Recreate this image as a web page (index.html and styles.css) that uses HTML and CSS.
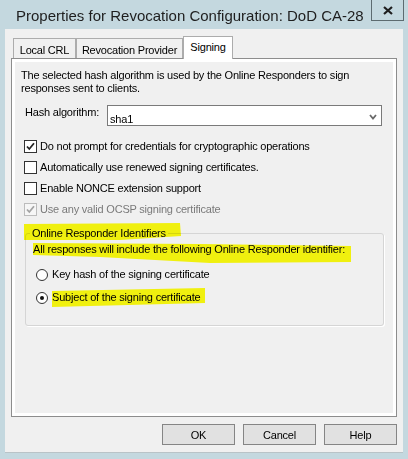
FILE: index.html
```html
<html lang="en">
<head>
    <title>Properties for Revocation Configuration</title>
    <link rel="stylesheet" href="styles.css">
</head>
<body>
    <div class="titlebar">
        <span class="title">Properties for Revocation Configuration: DoD CA-28</span>
        <span class="close">
            <svg width="10" height="9" viewBox="0 0 10 9"><path d="M1 1 L9 8 M9 1 L1 8" stroke="#1e1e1e" stroke-width="2.2" fill="none"/></svg>
        </span>
    </div>
    <div class="client">
        <div class="tabs">
            <div class="tab tabCrl">Local CRL</div>
            <div class="tab tabProvider">Revocation Provider</div>
            <div class="tab tabSigning selected">Signing</div>
        </div>
        <div class="panel">
            <div class="page">
                <p class="intro">The selected hash algorithm is used by the Online Responders to sign<br>responses sent to clients.</p>

                <div class="hashRow">
                    <span class="hashLabel">Hash algorithm:</span>
                    <div class="select">
                        <span>sha1</span>
                        <svg class="chevron" width="8" height="6" viewBox="0 0 8 6"><path d="M1 1 L4 4.5 L7 1" stroke="#6a6a6a" stroke-width="1.8" fill="none"/></svg>
                    </div>
                </div>

                <div class="checks">
                    <div class="check">
                        <span class="box"><svg width="11" height="11" viewBox="0 0 11 11"><path d="M2 5.5 L4.3 8 L9 2.3" stroke="#222" stroke-width="1.8" fill="none"/></svg></span>
                        <span>Do not prompt for credentials for cryptographic operations</span>
                    </div>
                    <div class="check">
                        <span class="box"></span>
                        <span>Automatically use renewed signing certificates.</span>
                    </div>
                    <div class="check">
                        <span class="box"></span>
                        <span>Enable NONCE extension support</span>
                    </div>
                    <div class="check disabled">
                        <span class="box"><svg width="11" height="11" viewBox="0 0 11 11"><path d="M2 5.5 L4.3 8 L9 2.3" stroke="#a3a3a3" stroke-width="1.8" fill="none"/></svg></span>
                        <span>Use any valid OCSP signing certificate</span>
                    </div>
                </div>

                <fieldset class="group">
                    <legend>Online Responder Identifiers</legend>
                    <p class="groupText">All responses will include the following Online Responder identifier:</p>
                    <div class="radio first">
                        <span class="dot"></span>
                        <span>Key hash of the signing certificate</span>
                    </div>
                    <div class="radio">
                        <span class="dot on"></span>
                        <span>Subject of the signing certificate</span>
                    </div>
                </fieldset>
            </div>
        </div>
        <div class="buttons">
            <button class="btn">OK</button>
            <button class="btn">Cancel</button>
            <button class="btn">Help</button>
        </div>
    </div>

    <!-- highlighter marks drawn over the group box -->
    <svg class="marker" width="408" height="459" viewBox="0 0 408 459">
        <polygon points="24,224 180,223 181,236 120,240 24,240" fill="#ffff10"/>
        <polygon points="33,243 200,244 351,246 351,262 210,263 100,257 33,255" fill="#ffff10"/>
        <polygon points="52,291 205,288 205,303 52,307" fill="#ffff10"/>
    </svg>
</body>
</html>
```

FILE: styles.css
```css
body {
    margin: 0;
    width: 408px;
    height: 459px;
    overflow: hidden;
    background-color: #c4d8df;
    font-family: "Liberation Sans", Arial, sans-serif;
    font-size: 11px;
    letter-spacing: -0.2px;
    color: #000;
}
.titlebar {
    height: 29px;
    display: flex;
    align-items: flex-start;
}
.title {
    margin-left: 16px;
    margin-top: 7px;
    font-size: 15px;
    line-height: 18px;
    letter-spacing: 0;
    color: #1e1e1e;
}
.close {
    margin-left: auto;
    margin-right: 4px;
    width: 33px;
    height: 21px;
    box-sizing: border-box;
    border: 1px solid #5d6b70;
    border-top: none;
    display: flex;
    align-items: center;
    justify-content: center;
}
.client {
    margin: 0 5px;
    height: 424px;
    box-sizing: border-box;
    background-color: #f0f0f0;
    border-bottom: 1px solid #b9c3c7;
}
.tabs {
    height: 29px;
    display: flex;
    align-items: flex-end;
    padding-left: 8px;
    box-sizing: border-box;
}
.tab {
    height: 20px;
    box-sizing: border-box;
    border: 1px solid #acacac;
    border-bottom: none;
    padding-top: 3px;
    line-height: 16px;
    text-align: center;
    background-color: #f0f0f0;
}
.tabCrl {
    width: 63px;
}
.tabProvider {
    width: 107px;
}
.tabSigning {
    width: 50px;
}
.tab.selected {
    height: 23px;
    margin-bottom: -1px;
    padding-top: 2px;
    background-color: #fff;
    position: relative;
    z-index: 1;
}
.panel {
    margin-left: 6px;
    width: 386px;
    height: 359px;
    box-sizing: border-box;
    border: 1px solid #8d8d8d;
    padding: 3px;
    background-color: #fff;
}
.page {
    height: 100%;
    background-color: #f0f0f0;
    overflow: hidden;
}
.intro {
    margin: 0;
    padding: 7px 0 0 6px;
    line-height: 13px;
    white-space: nowrap;
}
.hashRow {
    display: flex;
    height: 21px;
    margin: 10px 0 0 10px;
}
.hashLabel {
    width: 82px;
    padding-top: 1px;
    line-height: 13px;
}
.select {
    width: 275px;
    height: 21px;
    box-sizing: border-box;
    border: 1px solid #7a7a7a;
    background-color: #fff;
    display: flex;
    padding: 7px 0 0 2px;
    line-height: 13px;
}
.chevron {
    margin-left: auto;
    margin-right: 4px;
    margin-top: 1px;
}
.checks {
    margin-top: 10px;
}
.check {
    display: flex;
    align-items: center;
    height: 21px;
    margin-left: 9px;
    line-height: 13px;
}
.box {
    width: 13px;
    height: 13px;
    box-sizing: border-box;
    border: 1px solid #333;
    background-color: #fff;
    margin-right: 3px;
    display: flex;
    align-items: center;
    justify-content: center;
}
.check.disabled {
    color: #7a7a7a;
}
.check.disabled .box {
    border-color: #bcbcbc;
    background-color: #f6f6f6;
}
.group {
    margin: 7px 0 0 10px;
    width: 359px;
    min-width: 0;
    box-sizing: border-box;
    padding: 0 0 16px 7px;
    border: 1px solid #d5d5d5;
    border-radius: 3px;
    box-shadow: 1px 1px 0 #fff;
}
.group legend {
    padding: 0 2px;
    margin-left: -3px;
    line-height: 13px;
}
.groupText {
    margin: 3px 0 0;
    line-height: 13px;
}
.radio {
    display: flex;
    align-items: center;
    height: 23px;
    margin-left: 3px;
    line-height: 13px;
}
.radio.first {
    margin-top: 7px;
}
.dot {
    width: 12px;
    height: 12px;
    box-sizing: border-box;
    border: 1px solid #333;
    border-radius: 50%;
    background-color: #fff;
    margin-right: 4px;
    display: flex;
    align-items: center;
    justify-content: center;
}
.dot.on::after {
    content: "";
    width: 4px;
    height: 4px;
    border-radius: 50%;
    background-color: #111;
}
.buttons {
    display: flex;
    justify-content: flex-end;
    gap: 8px;
    margin: 7px 6px 0 0;
}
.btn {
    width: 73px;
    height: 21px;
    padding: 0;
    box-sizing: border-box;
    border: 1px solid #858585;
    border-radius: 0;
    background-color: #e1e1e1;
    font-family: "Liberation Sans", Arial, sans-serif;
    font-size: 11px;
    letter-spacing: -0.2px;
    color: #000;
}
.marker {
    position: absolute;
    top: 0;
    left: 0;
    pointer-events: none;
    mix-blend-mode: multiply;
}
```
